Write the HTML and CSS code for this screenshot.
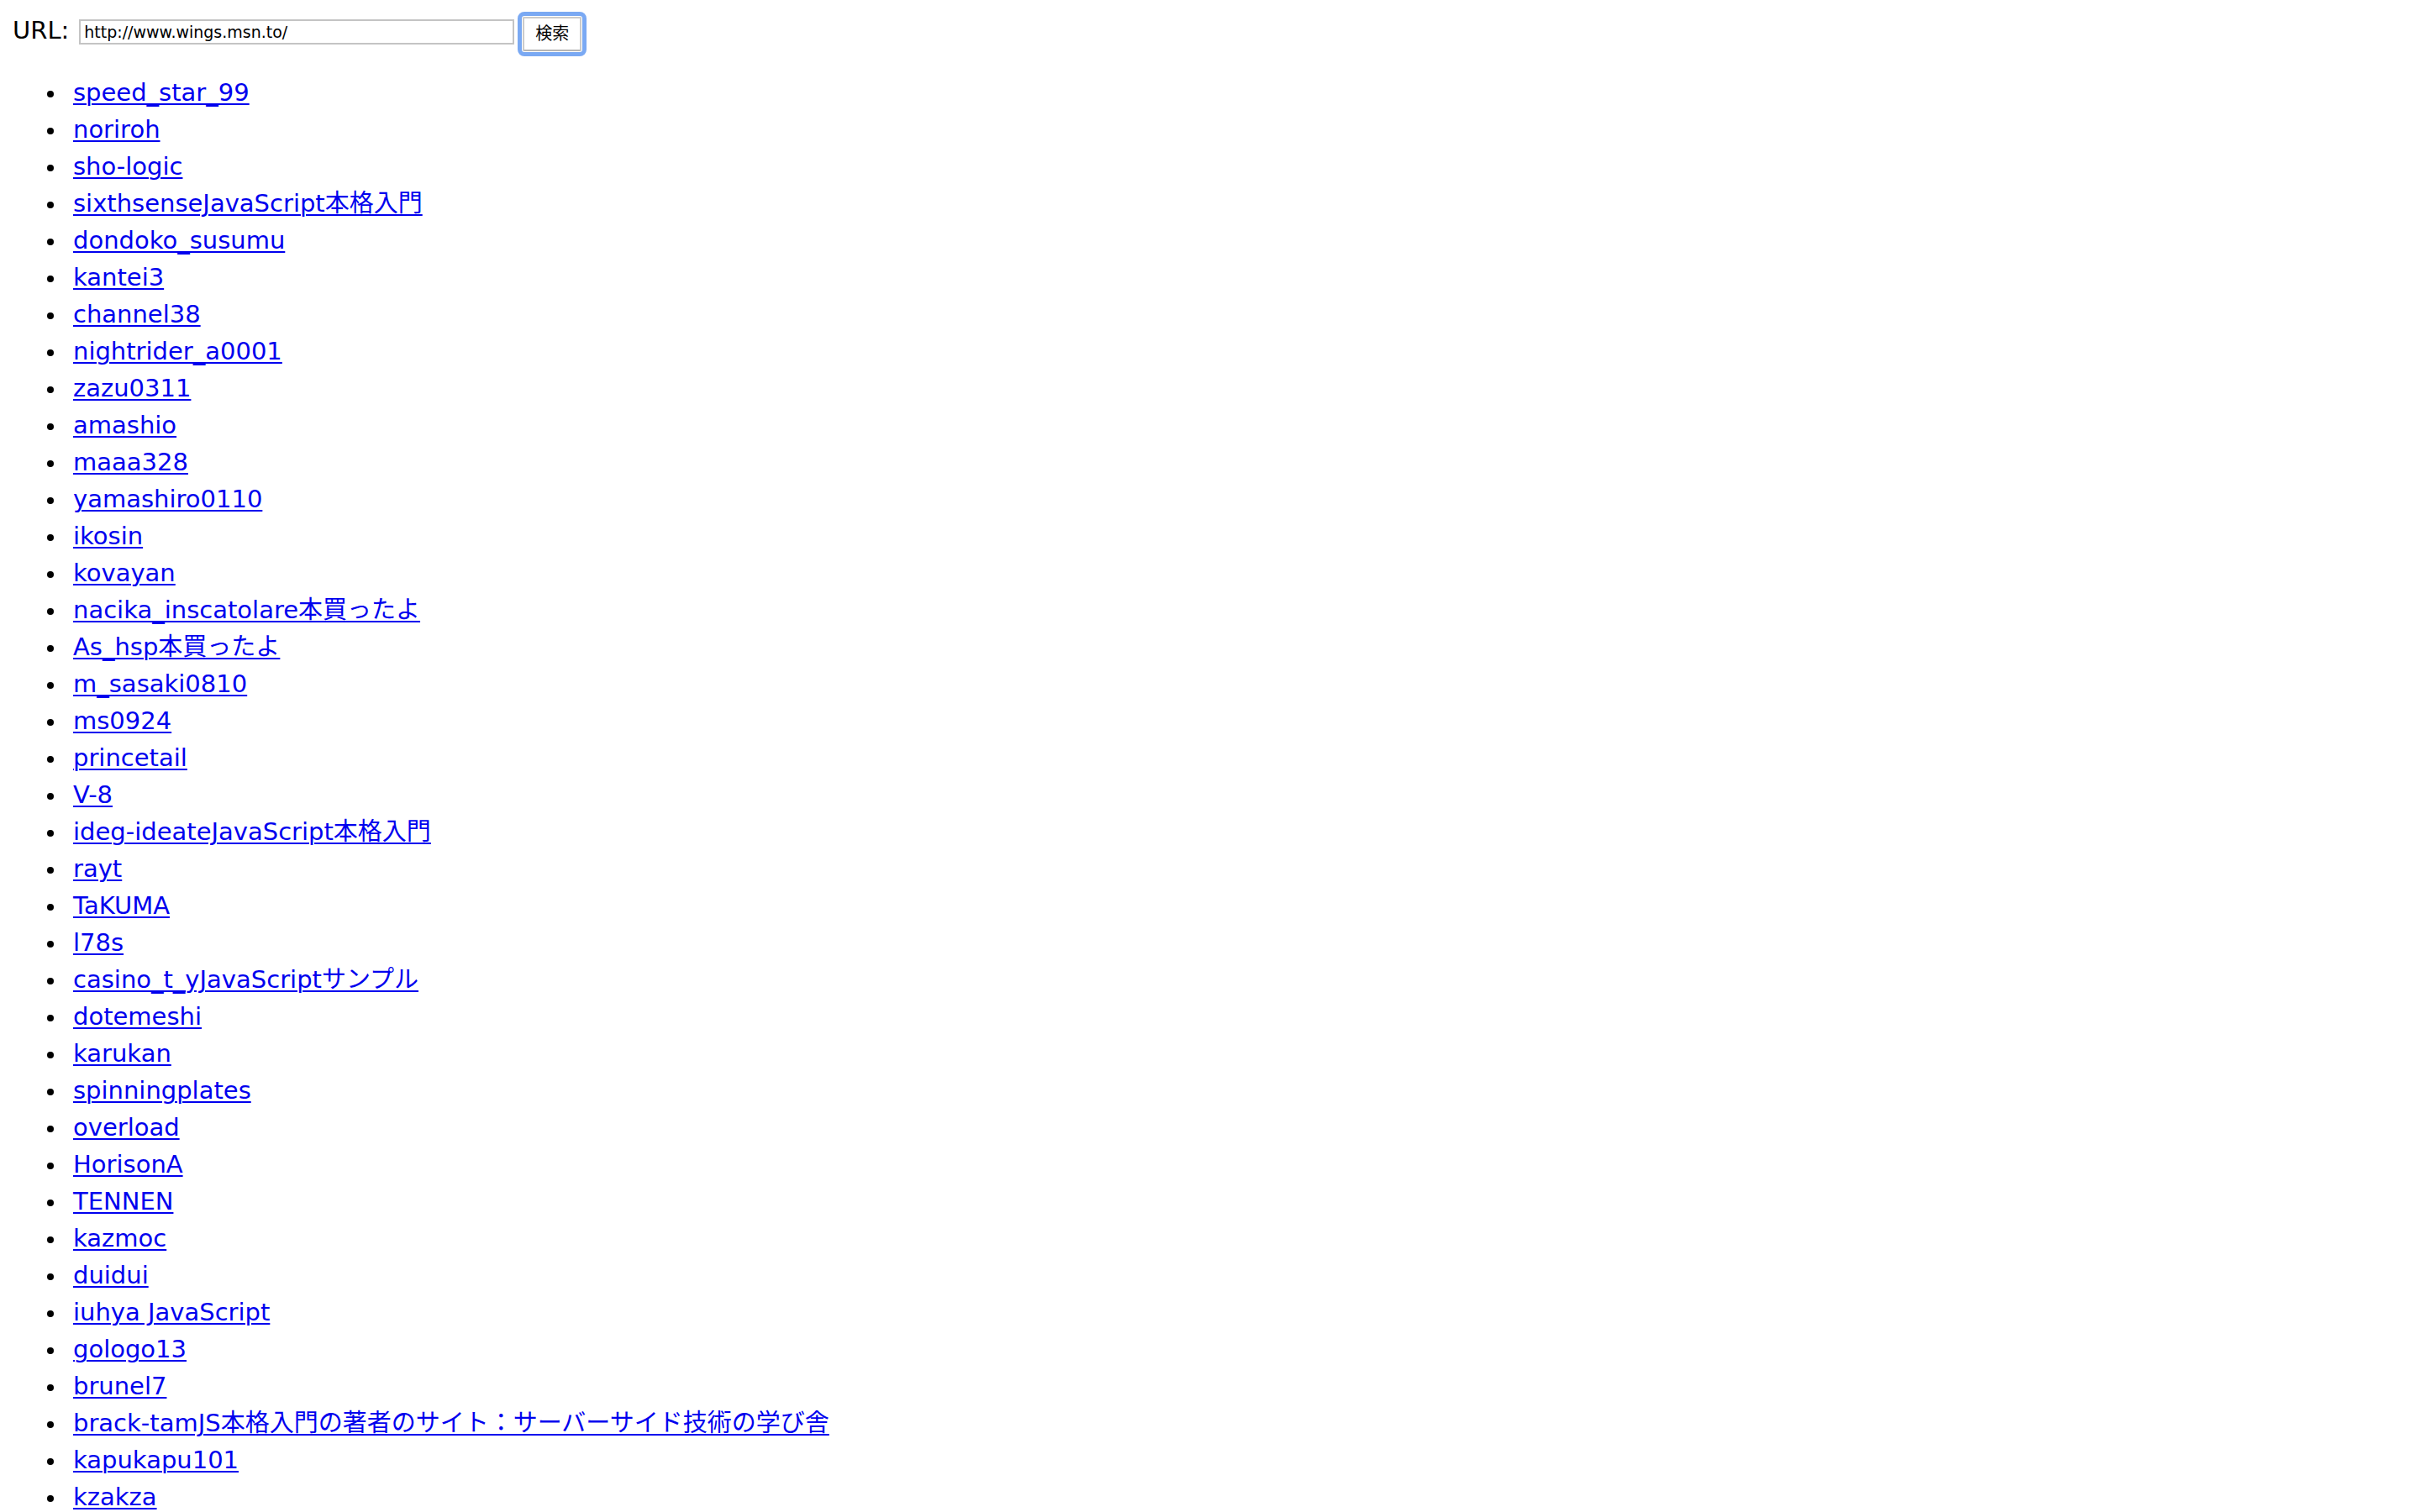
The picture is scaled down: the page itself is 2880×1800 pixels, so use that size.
FILE: index.html
```html
<!DOCTYPE html>
<html lang="ja">
<head>
<meta charset="utf-8">
<title>リンク一覧</title>
<link rel="stylesheet" href="styles.css">
</head>
<body>
<form class="search">
  <label class="search-label" for="url">URL:</label>
  <input class="search-input" id="url" type="text" value="http://www.wings.msn.to/">
  <button class="search-button" type="button">検索</button>
</form>
<ul class="links">
  <li><a href="#">speed_star_99</a></li>
  <li><a href="#">noriroh</a></li>
  <li><a href="#">sho-logic</a></li>
  <li><a href="#">sixthsenseJavaScript本格入門</a></li>
  <li><a href="#">dondoko_susumu</a></li>
  <li><a href="#">kantei3</a></li>
  <li><a href="#">channel38</a></li>
  <li><a href="#">nightrider_a0001</a></li>
  <li><a href="#">zazu0311</a></li>
  <li><a href="#">amashio</a></li>
  <li><a href="#">maaa328</a></li>
  <li><a href="#">yamashiro0110</a></li>
  <li><a href="#">ikosin</a></li>
  <li><a href="#">kovayan</a></li>
  <li><a href="#">nacika_inscatolare本買ったよ</a></li>
  <li><a href="#">As_hsp本買ったよ</a></li>
  <li><a href="#">m_sasaki0810</a></li>
  <li><a href="#">ms0924</a></li>
  <li><a href="#">princetail</a></li>
  <li><a href="#">V-8</a></li>
  <li><a href="#">ideg-ideateJavaScript本格入門</a></li>
  <li><a href="#">rayt</a></li>
  <li><a href="#">TaKUMA</a></li>
  <li><a href="#">l78s</a></li>
  <li><a href="#">casino_t_yJavaScriptサンプル</a></li>
  <li><a href="#">dotemeshi</a></li>
  <li><a href="#">karukan</a></li>
  <li><a href="#">spinningplates</a></li>
  <li><a href="#">overload</a></li>
  <li><a href="#">HorisonA</a></li>
  <li><a href="#">TENNEN</a></li>
  <li><a href="#">kazmoc</a></li>
  <li><a href="#">duidui</a></li>
  <li><a href="#">iuhya JavaScript</a></li>
  <li><a href="#">gologo13</a></li>
  <li><a href="#">brunel7</a></li>
  <li><a href="#">brack-tamJS本格入門の著者のサイト：サーバーサイド技術の学び舎</a></li>
  <li><a href="#">kapukapu101</a></li>
  <li><a href="#">kzakza</a></li>
</ul>
</body>
</html>
```

FILE: styles.css
```css
html {
  background: #ffffff;
}

body {
  margin: 0;
  padding: 14px 14px 0 14px;
  font-family: "DejaVu Sans", "Noto Sans CJK JP", sans-serif;
  font-size: 29px;
  line-height: 44px;
  color: #000000;
}

.search {
  display: flex;
  align-items: flex-start;
  height: 44px;
  margin: 0;
}

.search-label {
  display: block;
  height: 44px;
  padding-left: 1px;
}

.search-input {
  box-sizing: border-box;
  width: 518px;
  height: 30px;
  margin: 9px 0 0 12px;
  padding: 0 4px;
  border: 2px solid #c4c4c4;
  background: #ffffff;
  font-family: "DejaVu Sans", "Noto Sans CJK JP", sans-serif;
  font-size: 19px;
  line-height: 26px;
  color: #000000;
  outline: none;
}

.search-button {
  box-sizing: border-box;
  width: 70px;
  height: 41px;
  margin: 6px 0 0 10px;
  padding: 0 0 4px 0;
  border: 2px solid #cbcbcb;
  border-bottom-color: #b5b5b5;
  border-radius: 2px;
  background: #ffffff;
  font-family: "Noto Sans CJK JP", sans-serif;
  font-size: 20px;
  line-height: 33px;
  color: #000000;
  outline: 5px solid #7aa9f3;
  outline-offset: 1px;
}

.links {
  margin: 30px 0 0 0;
  padding: 0 0 0 73px;
  list-style: none;
}

.links li {
  height: 44px;
}

.links li::before {
  content: "";
  display: inline-block;
  width: 8px;
  height: 8px;
  margin-left: -31px;
  margin-right: 23px;
  border-radius: 50%;
  background: #000000;
  vertical-align: 4px;
}

.links a {
  color: #0000ee;
  text-decoration: underline;
  text-decoration-thickness: 2px;
  text-underline-offset: 3px;
}
```
